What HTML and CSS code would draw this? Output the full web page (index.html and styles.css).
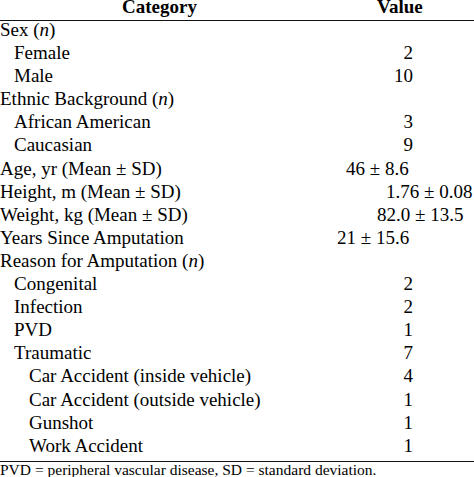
FILE: index.html
```html
<!DOCTYPE html>
<html lang="en">
<head>
<meta charset="utf-8">
<title>Participant characteristics</title>
<link rel="stylesheet" href="styles.css">
</head>
<body>
<div class="table">
  <div class="head">
    <div class="h-cat">Category</div>
    <div class="h-val">Value</div>
  </div>
  <div class="body">
    <div class="row"><div class="cat">Sex (<em>n</em>)</div><div class="val"></div></div>
    <div class="row"><div class="cat l1">Female</div><div class="val num">2</div></div>
    <div class="row"><div class="cat l1">Male</div><div class="val num">10</div></div>
    <div class="row"><div class="cat">Ethnic Background (<em>n</em>)</div><div class="val"></div></div>
    <div class="row"><div class="cat l1">African American</div><div class="val num">3</div></div>
    <div class="row"><div class="cat l1">Caucasian</div><div class="val num">9</div></div>
    <div class="row"><div class="cat">Age, yr (Mean ± SD)</div><div class="val age">46 ± 8.6</div></div>
    <div class="row"><div class="cat">Height, m (Mean ± SD)</div><div class="val height">1.76 ± 0.08</div></div>
    <div class="row"><div class="cat">Weight, kg (Mean ± SD)</div><div class="val weight">82.0 ± 13.5</div></div>
    <div class="row"><div class="cat">Years Since Amputation</div><div class="val years">21 ± 15.6</div></div>
    <div class="row"><div class="cat">Reason for Amputation (<em>n</em>)</div><div class="val"></div></div>
    <div class="row"><div class="cat l1">Congenital</div><div class="val num">2</div></div>
    <div class="row"><div class="cat l1">Infection</div><div class="val num">2</div></div>
    <div class="row"><div class="cat l1">PVD</div><div class="val num">1</div></div>
    <div class="row"><div class="cat l1">Traumatic</div><div class="val num">7</div></div>
    <div class="row"><div class="cat l2">Car Accident (inside vehicle)</div><div class="val num">4</div></div>
    <div class="row"><div class="cat l2">Car Accident (outside vehicle)</div><div class="val num">1</div></div>
    <div class="row"><div class="cat l2">Gunshot</div><div class="val num">1</div></div>
    <div class="row"><div class="cat l2">Work Accident</div><div class="val num">1</div></div>
  </div>
  <div class="note">PVD = peripheral vascular disease, SD = standard deviation.</div>
</div>
</body>
</html>
```
FILE: styles.css
```css
html, body {
  margin: 0;
  padding: 0;
  background: #fff;
}
body {
  font-family: "Liberation Serif", "Times New Roman", serif;
  font-size: 19px;
  color: #000;
  width: 474px;
  overflow: hidden;
}
.table {
  width: 474px;
}
.head {
  display: grid;
  grid-template-columns: 319px 155px;
  font-weight: bold;
  line-height: 13px;
  padding-bottom: 7px;
  border-bottom: 1px solid #111;
}
.h-cat {
  text-align: center;
}
.h-val {
  padding-left: 58px;
  white-space: nowrap;
}
.body {
  padding-bottom: 1.5px;
  border-bottom: 1px solid #111;
}
.row {
  display: grid;
  grid-template-columns: 319px 155px;
  height: 23.1px;
  line-height: 17px;
  white-space: nowrap;
}
.cat em {
  font-style: italic;
}
.l1 { padding-left: 14px; }
.l2 { padding-left: 29px; }
.val { white-space: nowrap; }
.num { text-align: right; padding-right: 61px; }
.age { padding-left: 27px; }
.height { padding-left: 67px; }
.weight { padding-left: 58px; }
.years { padding-left: 18px; }
.note {
  font-size: 15.5px;
  line-height: 15.5px;
  white-space: nowrap;
}
```
